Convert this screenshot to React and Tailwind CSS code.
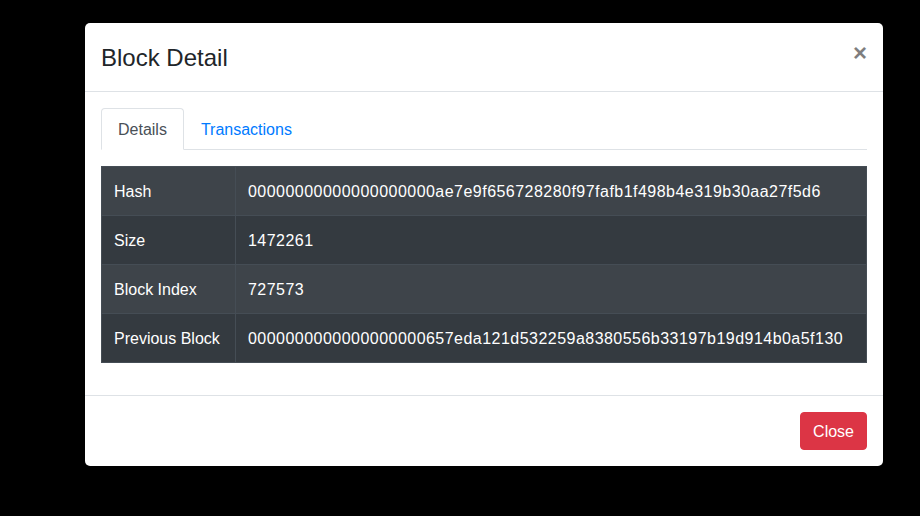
import { useState } from 'react';

const FONT = { fontFamily: '"Liberation Sans", Arial, sans-serif' };

const ROWS = [
  { label: 'Hash', value: '00000000000000000000ae7e9f656728280f97fafb1f498b4e319b30aa27f5d6' },
  { label: 'Size', value: '1472261' },
  { label: 'Block Index', value: '727573' },
  { label: 'Previous Block', value: '0000000000000000000657eda121d532259a8380556b33197b19d914b0a5f130' },
];

const TABS = ['Details', 'Transactions'];

export default function App() {
  const [tab, setTab] = useState('Details');

  return (
    <div className="h-[516px] w-full bg-black pt-[23px] pl-[85px]" style={FONT}>
      <div className="w-[798px] rounded-[5px] bg-white text-[#212529]">
        {/* Header */}
        <div className="flex h-[69px] items-center justify-between border-b border-[#dee2e6] px-4">
          <h4 className="pt-[2px] text-[24px] leading-[1.2] font-medium">Block Detail</h4>
          <button
            type="button"
            className="mb-[8px] text-[24px] leading-none font-bold text-black opacity-50"
          >
            ×
          </button>
        </div>

        {/* Body */}
        <div className="p-4">
          <ul className="flex border-b border-[#dee2e6]">
            {TABS.map((t) => (
              <li key={t} className="-mb-px">
                <button
                  type="button"
                  onClick={() => setTab(t)}
                  className={
                    t === tab
                      ? 'block rounded-t-[4px] border border-[#dee2e6] border-b-white bg-white px-4 pt-[9px] pb-[7px] text-[16px] leading-6 text-[#495057]'
                      : 'block rounded-t-[4px] border border-transparent px-4 pt-[9px] pb-[7px] text-[16px] leading-6 text-[#007bff]'
                  }
                >
                  {t}
                </button>
              </li>
            ))}
          </ul>

          <table className="mt-4 mb-4 w-full table-fixed border-collapse border border-[#454d55] bg-[#343a40] text-[16px] leading-6 text-white">
            <colgroup>
              <col className="w-[134px]" />
              <col />
            </colgroup>
            <tbody>
              {ROWS.map((r, i) => (
                <tr key={r.label} className={i % 2 === 0 ? 'bg-[#3e444a]' : ''}>
                  <td className="border border-[#454d55] px-3 pt-[13px] pb-[11px] whitespace-nowrap">{r.label}</td>
                  <td className="border border-[#454d55] px-3 pt-[13px] pb-[11px] whitespace-nowrap tracking-[0.47px]">
                    {r.value}
                  </td>
                </tr>
              ))}
            </tbody>
          </table>
        </div>

        {/* Footer */}
        <div className="flex justify-end border-t border-[#dee2e6] p-4">
          <button
            type="button"
            className="rounded-[4px] border border-[#dc3545] bg-[#dc3545] px-3 pt-[7px] pb-[5px] text-[16px] leading-6 text-white"
          >
            Close
          </button>
        </div>
      </div>
    </div>
  );
}
